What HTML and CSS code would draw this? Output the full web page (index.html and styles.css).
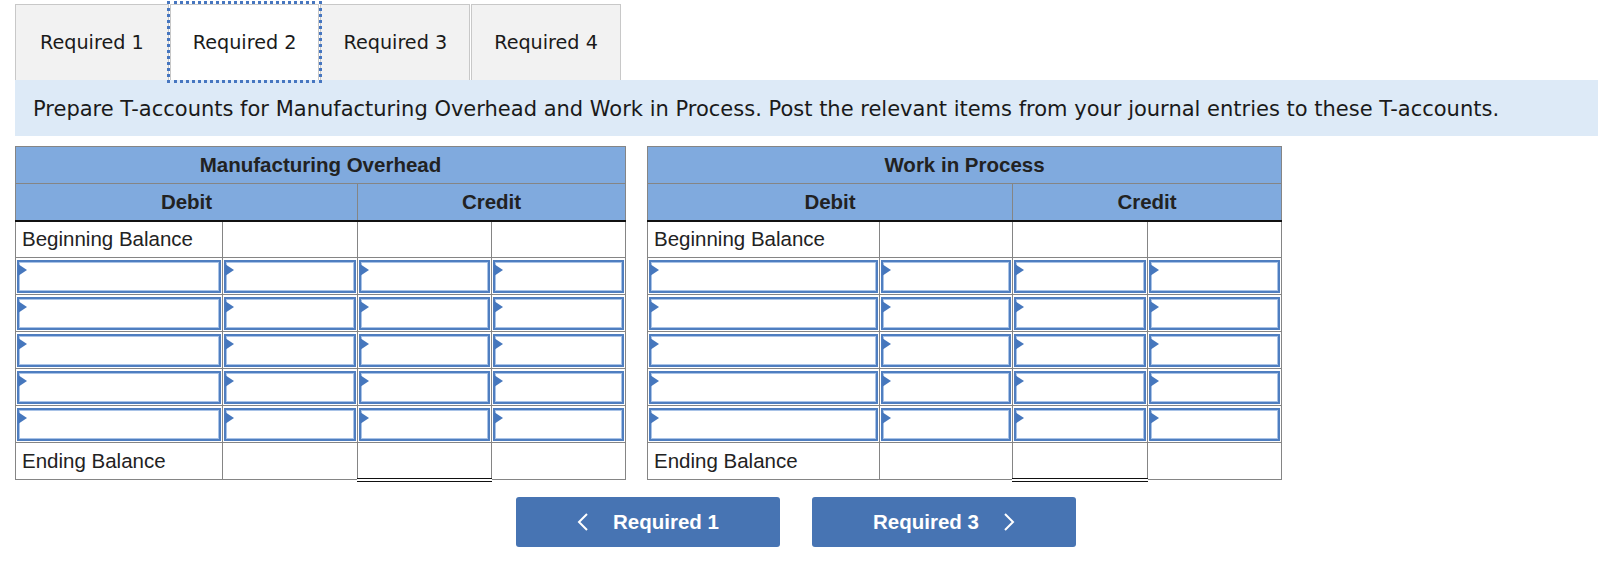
FILE: index.html
```html
<!DOCTYPE html>
<html lang="en">
<head>
    <meta charset="utf-8" />
    <title>T-accounts | Required 2</title>
    <link rel="stylesheet" href="styles.css">
</head>
<body>
    <div class="page">
        <div class="tabs">
            <div class="tab">Required 1</div>
            <div class="tab active">Required 2</div>
            <div class="tab">Required 3</div>
            <div class="tab">Required 4</div>
        </div>
        <div class="instructions">
            Prepare T-accounts for Manufacturing Overhead and Work in Process. Post the relevant items from your journal entries to these T-accounts.
        </div>

        <div class="accounts">
            <!-- Manufacturing Overhead -->
            <table class="t-account mo">
                <colgroup>
                    <col class="c1"><col class="c2"><col class="c3"><col class="c4">
                </colgroup>
                <tr class="head"><th colspan="4">Manufacturing Overhead</th></tr>
                <tr class="head sub"><th colspan="2">Debit</th><th colspan="2" class="split">Credit</th></tr>
                <tr>
                    <td class="label">Beginning Balance</td><td></td><td class="split"></td><td></td>
                </tr>
                <tr class="entry">
                    <td><div class="field"></div></td><td><div class="field"></div></td>
                    <td class="split"><div class="field"></div></td><td><div class="field"></div></td>
                </tr>
                <tr class="entry">
                    <td><div class="field"></div></td><td><div class="field"></div></td>
                    <td class="split"><div class="field"></div></td><td><div class="field"></div></td>
                </tr>
                <tr class="entry">
                    <td><div class="field"></div></td><td><div class="field"></div></td>
                    <td class="split"><div class="field"></div></td><td><div class="field"></div></td>
                </tr>
                <tr class="entry">
                    <td><div class="field"></div></td><td><div class="field"></div></td>
                    <td class="split"><div class="field"></div></td><td><div class="field"></div></td>
                </tr>
                <tr class="entry">
                    <td><div class="field"></div></td><td><div class="field"></div></td>
                    <td class="split"><div class="field"></div></td><td><div class="field"></div></td>
                </tr>
                <tr class="ending">
                    <td class="label">Ending Balance</td><td></td><td class="split total"></td><td></td>
                </tr>
            </table>

            <!-- Work in Process -->
            <table class="t-account wip">
                <colgroup>
                    <col class="c1"><col class="c2"><col class="c3"><col class="c4">
                </colgroup>
                <tr class="head"><th colspan="4">Work in Process</th></tr>
                <tr class="head sub"><th colspan="2">Debit</th><th colspan="2" class="split">Credit</th></tr>
                <tr>
                    <td class="label">Beginning Balance</td><td></td><td class="split"></td><td></td>
                </tr>
                <tr class="entry">
                    <td><div class="field"></div></td><td><div class="field"></div></td>
                    <td class="split"><div class="field"></div></td><td><div class="field"></div></td>
                </tr>
                <tr class="entry">
                    <td><div class="field"></div></td><td><div class="field"></div></td>
                    <td class="split"><div class="field"></div></td><td><div class="field"></div></td>
                </tr>
                <tr class="entry">
                    <td><div class="field"></div></td><td><div class="field"></div></td>
                    <td class="split"><div class="field"></div></td><td><div class="field"></div></td>
                </tr>
                <tr class="entry">
                    <td><div class="field"></div></td><td><div class="field"></div></td>
                    <td class="split"><div class="field"></div></td><td><div class="field"></div></td>
                </tr>
                <tr class="entry">
                    <td><div class="field"></div></td><td><div class="field"></div></td>
                    <td class="split"><div class="field"></div></td><td><div class="field"></div></td>
                </tr>
                <tr class="ending">
                    <td class="label">Ending Balance</td><td></td><td class="split total"></td><td></td>
                </tr>
            </table>
        </div>

        <div class="nav">
            <a class="btn" href="#">
                <svg class="chev" width="12" height="20" viewBox="0 0 12 20"><polyline points="10,2 2,10 10,18" /></svg>
                <span>Required 1</span>
            </a>
            <a class="btn" href="#">
                <span>Required 3</span>
                <svg class="chev" width="12" height="20" viewBox="0 0 12 20"><polyline points="2,2 10,10 2,18" /></svg>
            </a>
        </div>
    </div>
</body>
</html>
```

FILE: styles.css
```css
body {
    margin: 0;
    background: #fff;
    color: #222;
}

.page {
    padding: 4px 0 0 15px;
}

/* tabs */
.tabs {
    display: flex;
    gap: 1px;
}

.tab {
    height: 75px;
    padding: 0 22px;
    display: flex;
    align-items: center;
    background: #f2f2f2;
    border: 1px solid #c8c8c8;
    border-bottom: none;
    font-family: "DejaVu Sans", Verdana, sans-serif;
    font-size: 19.2px;
    color: #1a1a1a;
}

.tab:first-child {
    padding: 0 24px;
}

.tab.active {
    background: #fff;
    outline: 3px dotted #4676c0;
    position: relative;
    z-index: 1;
}

.instructions {
    height: 56px;
    display: flex;
    align-items: center;
    padding: 2px 0 0 18px;
    box-sizing: border-box;
    background: #ddeaf7;
    font-family: "DejaVu Sans", Verdana, sans-serif;
    font-size: 21px;
    color: #1a1a1a;
}

/* t-accounts */
.accounts {
    display: flex;
    gap: 21px;
    margin-top: 10px;
}

.t-account {
    border-collapse: collapse;
    table-layout: fixed;
    font-family: "Liberation Sans", Arial, sans-serif;
    font-size: 20.5px;
    color: #222;
}

.mo { width: 610px; }
.mo .c1 { width: 207px; }
.mo .c2 { width: 135px; }
.mo .c3 { width: 134px; }
.mo .c4 { width: 134px; }

.wip { width: 634px; }
.wip .c1 { width: 232px; }
.wip .c2 { width: 133px; }
.wip .c3 { width: 135px; }
.wip .c4 { width: 134px; }

.t-account tr {
    height: 37px;
}

.t-account th,
.t-account td {
    border: 1px solid #858585;
    padding: 0;
}

.t-account th {
    background: #80aade;
    font-weight: bold;
    text-align: center;
}

.t-account .sub th {
    border-bottom: 2px solid #111;
}

.t-account td.split {
    border-left: 1px solid #111;
}

.t-account td.label {
    padding-left: 6px;
    white-space: nowrap;
}

.entry td {
    padding: 1px;
}

.field {
    position: relative;
    height: 29px;
    border: 2px solid #4f7ec0;
    box-shadow: inset 0 0 0 1px #a9c3e7;
    background: #fff;
}

.field::before {
    content: "";
    position: absolute;
    top: 2px;
    left: -1px;
    border-top: 6px solid transparent;
    border-bottom: 6px solid transparent;
    border-left: 9px solid #4677bd;
}

.ending {
    height: 35px;
}

.ending td {
    border-top: 1px solid #111;
}

.ending td.total {
    border-bottom: 4px double #111;
}

/* buttons */
.nav {
    display: flex;
    justify-content: center;
    gap: 32px;
    margin: 15px 0 0 -21px;
}

.btn {
    width: 264px;
    height: 50px;
    display: flex;
    align-items: center;
    justify-content: center;
    gap: 24px;
    background: #4774b3;
    border-radius: 3px;
    color: #fff;
    text-decoration: none;
    font-family: "Liberation Sans", Arial, sans-serif;
    font-weight: bold;
    font-size: 20.5px;
}

.chev polyline {
    fill: none;
    stroke: #fff;
    stroke-width: 2;
}
```
